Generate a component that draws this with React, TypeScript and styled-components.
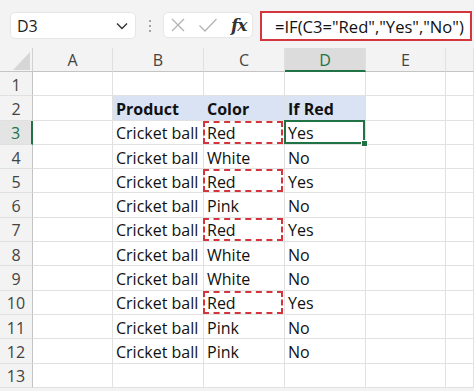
import React from "react";
import styled, { createGlobalStyle, css } from "styled-components";

const Global = createGlobalStyle`
  html, body { margin: 0; padding: 0; background: #f3f3f3; }
  body { font-family: "Open Sans", "Noto Sans", sans-serif; }
`;

const Page = styled.div`
  width: 474px;
  height: 391px;
  overflow: hidden;
  background: #f3f3f3;
`;

const Toolbar = styled.div`
  height: 48px;
  display: flex;
  align-items: center;
  padding-left: 10px;
  box-sizing: border-box;
`;

const NameBox = styled.div`
  width: 126px;
  height: 27px;
  margin-top: 3px;
  box-sizing: border-box;
  background: #fff;
  border: 1px solid #e6e6e6;
  border-radius: 5px;
  display: flex;
  align-items: center;
  justify-content: space-between;
  padding: 0 6px 0 6px;
  font-size: 16px;
  color: #222;
`;

const Dots = styled.div`
  width: 27px;
  display: flex;
  flex-direction: column;
  align-items: center;
  gap: 3px;
  margin-top: 3px;
  span {
    width: 2px;
    height: 2px;
    background: #8a8a8a;
    border-radius: 1px;
  }
`;

const FxBox = styled.div`
  width: 90px;
  height: 26px;
  margin-top: 2px;
  box-sizing: border-box;
  background: #fff;
  border: 1px solid #e6e6e6;
  border-radius: 5px;
  display: flex;
  align-items: center;
  padding-left: 6px;
  gap: 12px;
`;

const Fx = styled.span`
  font-family: "DejaVu Serif", "Liberation Serif", serif;
  font-style: italic;
  font-weight: 700;
  font-size: 17px;
  color: #333;
  margin-left: 1px;
  letter-spacing: -1px;
`;

const Formula = styled.div`
  margin-left: 7px;
  width: 212px;
  height: 30px;
  margin-top: 4px;
  box-sizing: border-box;
  background: #fff;
  border: 2px solid #d4343c;
  display: flex;
  align-items: center;
  padding-left: 13px;
  font-size: 16.6px;
  color: #111;
  white-space: nowrap;
`;

const Grid = styled.div`
  display: grid;
  grid-template-columns: 33px 80px 91px 81px 81px 80px 1fr;
  grid-template-rows: 24px repeat(13, 24.3px);
  background: #fff;
`;

const Corner = styled.div`
  background: #f3f3f3;
  border-right: 1px solid #d0d0d0;
  border-bottom: 1px solid #c4c4c4;
  position: relative;
  &::after {
    content: "";
    position: absolute;
    right: 2px;
    bottom: 1px;
    width: 0;
    height: 0;
    border-left: 17px solid transparent;
    border-bottom: 18px solid #d6d6d6;
  }
`;

const ColHead = styled.div<{ $active?: boolean }>`
  background: ${(p) => (p.$active ? "#dcdcdc" : "#f3f3f3")};
  border-right: 1px solid #e0e0e0;
  border-bottom: ${(p) => (p.$active ? "2px solid #217346" : "1px solid #c4c4c4")};
  display: flex;
  align-items: center;
  justify-content: center;
  padding-top: 1px;
  font-size: 16px;
  color: ${(p) => (p.$active ? "#217346" : "#444")};
  box-sizing: border-box;
`;

const RowHead = styled.div<{ $active?: boolean }>`
  background: ${(p) => (p.$active ? "#e4e4e4" : "#f3f3f3")};
  border-right: ${(p) => (p.$active ? "2px solid #217346" : "1px solid #c4c4c4")};
  border-bottom: 1px solid #e0e0e0;
  display: flex;
  align-items: center;
  justify-content: center;
  padding-top: 2px;
  font-size: 16px;
  color: ${(p) => (p.$active ? "#217346" : "#444")};
  box-sizing: border-box;
`;

const Cell = styled.div<{ $head?: boolean; $dash?: boolean; $sel?: boolean }>`
  position: relative;
  box-sizing: border-box;
  border-right: 1px solid #e1e1e1;
  border-bottom: 1px solid #e1e1e1;
  display: flex;
  align-items: center;
  padding: 2px 0 0 3px;
  font-size: 16px;
  color: #111;
  white-space: nowrap;
  ${(p) =>
    p.$head &&
    css`
      background: #dae3f3;
      font-weight: 700;
    `}
  ${(p) =>
    p.$dash &&
    css`
      &::after {
        content: "";
        position: absolute;
        left: -1px;
        top: 0;
        right: 1px;
        bottom: 0;
        border: 2px dashed #d4343c;
      }
    `}
  ${(p) =>
    p.$sel &&
    css`
      &::after {
        content: "";
        position: absolute;
        left: -1px;
        top: -1px;
        right: 0;
        bottom: 0;
        border: 2px solid #217346;
      }
      &::before {
        content: "";
        position: absolute;
        right: -3px;
        bottom: -3px;
        width: 5px;
        height: 5px;
        background: #217346;
        border: 1px solid #fff;
        z-index: 2;
      }
    `}
`;

const Chevron = () => (
  <svg width="14" height="10" viewBox="0 0 14 10">
    <path d="M2 2.5 L7 7.5 L12 2.5" fill="none" stroke="#333" strokeWidth="1.4" />
  </svg>
);

const Cross = () => (
  <svg width="16" height="16" viewBox="0 0 16 16">
    <path d="M2 2 L14 14 M14 2 L2 14" fill="none" stroke="#b3b3b3" strokeWidth="1.3" />
  </svg>
);

const Check = () => (
  <svg width="20" height="16" viewBox="0 0 20 16">
    <path d="M1.5 8.5 L7 14 L18.5 2" fill="none" stroke="#b3b3b3" strokeWidth="1.3" />
  </svg>
);

const cols = ["A", "B", "C", "D", "E", ""];

const data: [string, string, string][] = [
  ["Cricket ball", "Red", "Yes"],
  ["Cricket ball", "White", "No"],
  ["Cricket ball", "Red", "Yes"],
  ["Cricket ball", "Pink", "No"],
  ["Cricket ball", "Red", "Yes"],
  ["Cricket ball", "White", "No"],
  ["Cricket ball", "White", "No"],
  ["Cricket ball", "Red", "Yes"],
  ["Cricket ball", "Pink", "No"],
  ["Cricket ball", "Pink", "No"],
];

export default function App() {
  const rows: React.ReactNode[] = [];
  for (let r = 1; r <= 13; r++) {
    rows.push(
      <RowHead key={`h${r}`} $active={r === 3}>
        {r}
      </RowHead>
    );
    let b = "",
      c = "",
      d = "";
    let head = false;
    if (r === 2) {
      b = "Product";
      c = "Color";
      d = "If Red";
      head = true;
    } else if (r >= 3 && r <= 12) {
      [b, c, d] = data[r - 3];
    }
    rows.push(<Cell key={`a${r}`} />);
    rows.push(
      <Cell key={`b${r}`} $head={head}>
        {b}
      </Cell>
    );
    rows.push(
      <Cell key={`c${r}`} $head={head} $dash={c === "Red"}>
        {c}
      </Cell>
    );
    rows.push(
      <Cell key={`d${r}`} $head={head} $sel={r === 3}>
        {d}
      </Cell>
    );
    rows.push(<Cell key={`e${r}`} />);
    rows.push(<Cell key={`f${r}`} />);
  }
  return (
    <Page>
      <Global />
      <Toolbar>
        <NameBox>
          <span>D3</span>
          <Chevron />
        </NameBox>
        <Dots>
          <span />
          <span />
          <span />
        </Dots>
        <FxBox>
          <Cross />
          <Check />
          <Fx>fx</Fx>
        </FxBox>
        <Formula>=IF(C3="Red","Yes","No")</Formula>
      </Toolbar>
      <Grid>
        <Corner />
        {cols.map((c) => (
          <ColHead key={c || "x"} $active={c === "D"}>
            {c}
          </ColHead>
        ))}
        {rows}
      </Grid>
    </Page>
  );
}
